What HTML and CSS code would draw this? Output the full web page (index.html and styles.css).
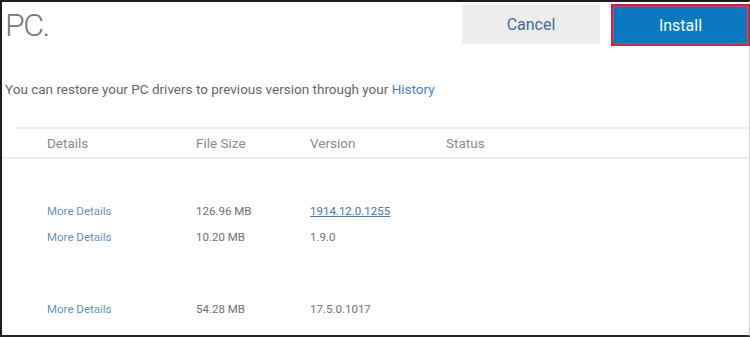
FILE: index.html
```html
<!DOCTYPE html>
<html>
<head>
<meta charset="utf-8">
<link rel="stylesheet" href="styles.css">
</head>
<body>
<div class="frame">
  <div class="top">
    <div class="title">PC.</div>
    <div class="actions">
      <button class="btn cancel">Cancel</button>
      <div class="install-ring"><button class="btn install">Install</button></div>
    </div>
  </div>
  <p class="note">You can restore your PC drivers to previous version through your <a class="link">History</a></p>
  <div class="divider"></div>
  <div class="grid head">
    <span>Details</span><span>File Size</span><span>Version</span><span>Status</span>
  </div>
  <div class="rows">
    <div class="grid row first">
      <a class="more">More Details</a><span>126.96 MB</span><a class="ver">1914.12.0.1255</a><span></span>
    </div>
    <div class="grid row">
      <a class="more">More Details</a><span>10.20 MB</span><span>1.9.0</span><span></span>
    </div>
    <div class="grid row later">
      <a class="more">More Details</a><span>54.28 MB</span><span>17.5.0.1017</span><span></span>
    </div>
  </div>
</div>
</body>
</html>
```

FILE: styles.css
```css
* { box-sizing: border-box; }
html, body { margin: 0; padding: 0; background: #fff; }
body { font-family: Roboto, "Liberation Sans", Arial, sans-serif; width: 750px; height: 338px; overflow: hidden; }
.frame {
  height: 337px;
  border-top: 2px solid #1c1c1c;
  border-left: 2px solid #1c1c1c;
  border-bottom: 2px solid #2a2a2a;
  border-right: 1px solid #cfcfcf;
}
.top { display: flex; justify-content: space-between; align-items: flex-start; height: 48px; }
.title { font-size: 32px; font-weight: 300; color: #777; padding-left: 3px; margin-top: 6px; line-height: 34px; letter-spacing: -1.5px; }
.actions { display: flex; align-items: flex-start; gap: 11px; }
.btn { border: none; font-family: inherit; font-size: 16px; padding: 0; cursor: pointer; }
.cancel { width: 138px; height: 39px; margin-top: 3px; background: #ececec; color: #42698d; }
.install-ring { width: 139px; height: 42px; margin-top: 2px; margin-right: -1px; border: 2px solid #c8283a; padding: 1px; background: #b64e78; }
.install { width: 100%; height: 100%; background: #0a78be; color: #fff; }
.note { margin: 31px 0 0 3px; font-size: 13.5px; color: #666; line-height: 16px; }
.link { color: #4a84bf; }
.divider { margin: 30px 0 0 13px; height: 2px; background: #efefef; }
.grid { display: grid; grid-template-columns: 149px 114px 136px 1fr; padding-left: 45px; }
.head {
  height: 30px; align-items: center;
  border-bottom: 2px solid #ececec;
  font-size: 13.5px; color: #8a8a8a;
}
.rows { font-size: 11.5px; color: #707070; }
.row { height: 26px; align-items: center; }
.row.first { margin-top: 39px; }
.row.later { margin-top: 46px; }
.more { color: #6690b8; }
.ver { color: #4a76a0; text-decoration: underline; }
```
